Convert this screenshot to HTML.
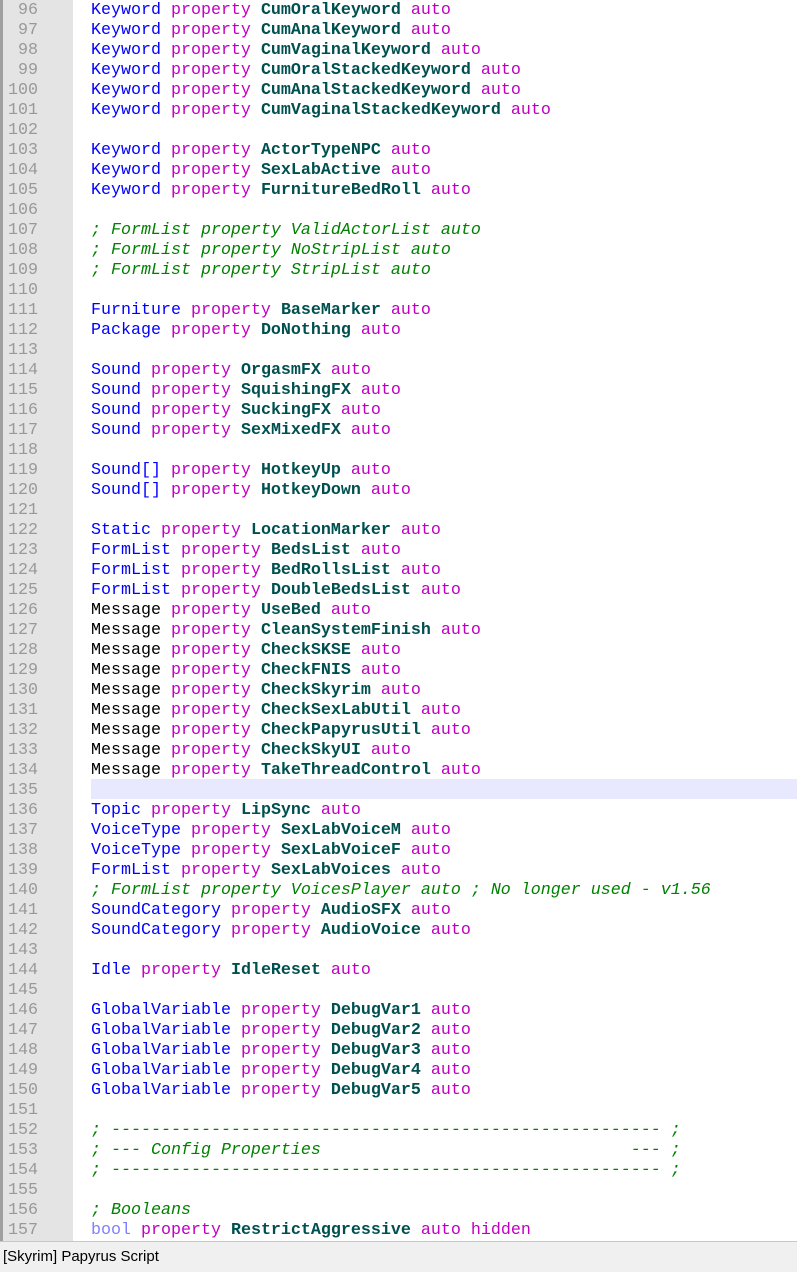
<!DOCTYPE html>
<html><head><style>
body{margin:0;width:797px;height:1272px;overflow:hidden;background:#fff;position:relative;font-family:"Liberation Mono",monospace;}
#ed{position:absolute;left:0;top:0;width:797px;height:1241px;overflow:hidden;}
#lb{position:absolute;left:0;top:0;width:3px;height:1241px;background:#a0a0a0;}
#gut{position:absolute;left:3px;top:0;width:70px;height:1241px;background:#e4e4e4;}
.l{position:absolute;left:0;width:797px;height:20px;line-height:20px;font-size:16.67px;white-space:pre;}
.n{position:absolute;left:3px;width:35px;text-align:right;color:#999;}
.c{position:absolute;left:91px;}
.hl{position:absolute;left:91px;width:706px;height:20px;background:#e8e8ff;}
.k{color:#0000ff}.p{color:#c000c0}.i{color:#005050;font-weight:bold}.a{color:#c000c0}.m{color:#000}.g{color:#008000;font-style:italic}.b{color:#8080ff}
#sb{position:absolute;left:0;top:1241px;width:797px;height:31px;background:#f0f0f0;border-top:1px solid #c8c8c8;box-sizing:border-box;font-family:"Liberation Sans",sans-serif;font-size:15px;line-height:30px;padding-left:3px;color:#000;}
</style></head><body>
<div id="ed">
<div id="lb"></div><div id="gut"></div>
<div class="hl" style="top:779px"></div>
<div id="lines"></div>
</div>
<div id="sb">[Skyrim] Papyrus Script</div>
<script>
var L=[
["k","Keyword","CumOralKeyword"],["k","Keyword","CumAnalKeyword"],["k","Keyword","CumVaginalKeyword"],["k","Keyword","CumOralStackedKeyword"],["k","Keyword","CumAnalStackedKeyword"],["k","Keyword","CumVaginalStackedKeyword"],null,
["k","Keyword","ActorTypeNPC"],["k","Keyword","SexLabActive"],["k","Keyword","FurnitureBedRoll"],null,
["g","; FormList property ValidActorList auto"],["g","; FormList property NoStripList auto"],["g","; FormList property StripList auto"],null,
["k","Furniture","BaseMarker"],["k","Package","DoNothing"],null,
["k","Sound","OrgasmFX"],["k","Sound","SquishingFX"],["k","Sound","SuckingFX"],["k","Sound","SexMixedFX"],null,
["k","Sound[]","HotkeyUp"],["k","Sound[]","HotkeyDown"],null,
["k","Static","LocationMarker"],["k","FormList","BedsList"],["k","FormList","BedRollsList"],["k","FormList","DoubleBedsList"],
["m","Message","UseBed"],["m","Message","CleanSystemFinish"],["m","Message","CheckSKSE"],["m","Message","CheckFNIS"],["m","Message","CheckSkyrim"],["m","Message","CheckSexLabUtil"],["m","Message","CheckPapyrusUtil"],["m","Message","CheckSkyUI"],["m","Message","TakeThreadControl"],null,
["k","Topic","LipSync"],["k","VoiceType","SexLabVoiceM"],["k","VoiceType","SexLabVoiceF"],["k","FormList","SexLabVoices"],
["g","; FormList property VoicesPlayer auto ; No longer used - v1.56"],
["k","SoundCategory","AudioSFX"],["k","SoundCategory","AudioVoice"],null,
["k","Idle","IdleReset"],null,
["k","GlobalVariable","DebugVar1"],["k","GlobalVariable","DebugVar2"],["k","GlobalVariable","DebugVar3"],["k","GlobalVariable","DebugVar4"],["k","GlobalVariable","DebugVar5"],null,
["g","; ------------------------------------------------------- ;"],
["g","; --- Config Properties                               --- ;"],
["g","; ------------------------------------------------------- ;"],null,
["g","; Booleans"],["b","bool","RestrictAggressive"," hidden"]
];
var h="";
for(var j=0;j<L.length;j++){var t=1+j*20,e=L[j],c="";
if(e){if(e[0]=="g")c='<span class="g">'+e[1]+'</span>';
else c='<span class="'+e[0]+'">'+e[1]+'</span> <span class="p">property</span> <span class="i">'+e[2]+'</span> <span class="a">auto'+(e[3]||"")+'</span>';}
h+='<div class="l" style="top:'+t+'px"><span class="n">'+(96+j)+'</span><span class="c">'+c+'</span></div>';}
document.getElementById("lines").innerHTML=h;
</script>
</body></html>
